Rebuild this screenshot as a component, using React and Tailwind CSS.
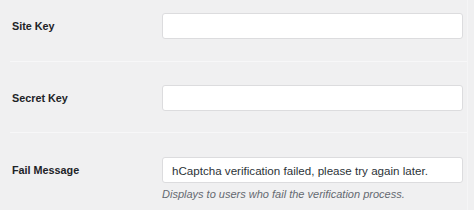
export default function App() {
  const rows = [
    { label: "Site Key", value: "", h: "h-[62px]", pt: "pt-[13px]" },
    { label: "Secret Key", value: "", h: "h-[71px]", pt: "pt-[23px]" },
    {
      label: "Fail Message",
      value: "hCaptcha verification failed, please try again later.",
      h: "h-[77px]",
      pt: "pt-[24px]",
      desc: "Displays to users who fail the verification process.",
    },
  ];

  return (
    <div className="w-[474px] h-[210px] overflow-hidden bg-[#f0f0f1] font-['Liberation_Sans',Arial,sans-serif] text-[#1d2327]">
      <div className="w-[468px] h-full border-r border-[#f5f5f6] pl-[10px]">
        {rows.map((row, i) => (
          <div
            key={row.label}
            className={`flex ${row.h} ${row.pt} ${i < rows.length - 1 ? "border-b border-[#f7f7f8]" : ""}`}
          >
            <div className="w-[152px] pl-[2px] flex items-start h-[26px]">
              <span className="text-[10.8px] font-bold leading-[27px] text-[#1d2327]">{row.label}</span>
            </div>
            <div className="flex flex-col">
              <input
                type="text"
                readOnly
                value={row.value}
                className="w-[301px] h-[26px] bg-white border border-[#dcdcde] rounded-[3px] px-[9px] text-[11.6px] text-[#2c3338] outline-none"
              />
              {row.desc && (
                <p className="mt-[2px] text-[11px] italic text-[#646970] leading-[18px]">{row.desc}</p>
              )}
            </div>
          </div>
        ))}
      </div>
    </div>
  );
}
